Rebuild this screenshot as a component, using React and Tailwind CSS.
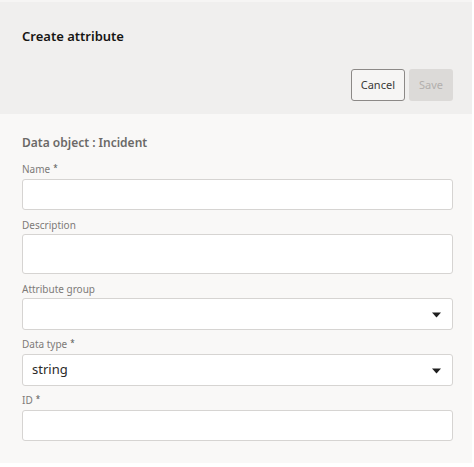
import { useState } from 'react';

function Label({ children, required }) {
  return (
    <div className="text-[10px] leading-[12px] text-[#7d7a78] mb-[3px]">
      {children}
      {required && <span className="relative -top-[2px] ml-[3px] text-[8px] text-[#555]">*</span>}
    </div>
  );
}

function TextInput({ tall }) {
  return (
    <input
      className={`block w-full rounded-[3px] border border-[#d6d4d2] bg-white px-[9px] text-[13px] outline-none ${tall ? 'h-[40px]' : 'h-[31px]'}`}
    />
  );
}

function Select({ value }) {
  return (
    <div className="flex h-[32px] w-full items-center rounded-[3px] border border-[#d6d4d2] bg-white pl-[9px] pr-[11px]">
      <span className="flex-1 text-[13px] text-[#2b2a29]">{value}</span>
      <svg width="9" height="6" viewBox="0 0 9 6" className="mt-[1px]">
        <path d="M0 0.5h9L4.5 5.5z" fill="#1f1f1f" />
      </svg>
    </div>
  );
}

export default function App() {
  const [dataType] = useState('string');

  return (
    <div className="h-[467px] w-[474px] bg-white" style={{ fontFamily: '"Noto Sans", "Open Sans", sans-serif' }}>
      <div className="w-[472px] h-[463px] flex flex-col bg-[#f9f8f7]">
        <div className="border-t-[2px] border-[#f6f5f4] bg-[#f0efee] pl-[22px] pr-[19px] pt-[25px] pb-[13px]">
          <h1 className="text-[13px] font-semibold leading-[18px] text-[#161513]">Create attribute</h1>
          <div className="mt-[24px] flex justify-end gap-[4px]">
            <button className="h-[32px] rounded-[3px] border border-[#8c8987] bg-[#f6f5f4] px-[9px] text-[11px] text-[#3a3937]">
              Cancel
            </button>
            <button disabled className="h-[32px] rounded-[3px] bg-[#dcdad8] px-[10px] text-[11px] text-[#b2afad]">
              Save
            </button>
          </div>
        </div>

        <div className="flex flex-col pl-[22px] pr-[19px] pt-[21px]">
          <div className="text-[12px] font-semibold leading-[16px] text-[#6b6967] mb-[12px]">Data object : Incident</div>

          <Label required>Name</Label>
          <TextInput />

          <div className="mt-[9px]">
            <Label>Description</Label>
            <TextInput tall />
          </div>

          <div className="mt-[9px]">
            <Label>Attribute group</Label>
            <Select value="" />
          </div>

          <div className="mt-[8px]">
            <Label required>Data type</Label>
            <Select value={dataType} />
          </div>

          <div className="mt-[8px]">
            <Label required>ID</Label>
            <TextInput />
          </div>
        </div>
      </div>
    </div>
  );
}
